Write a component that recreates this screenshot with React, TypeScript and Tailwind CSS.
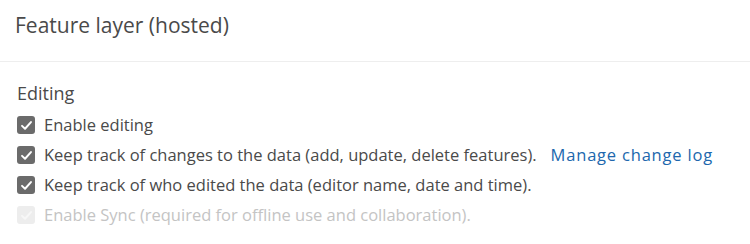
const Check = ({ disabled }: { disabled?: boolean }) => (
  <span
    className={`flex h-[18px] w-[18px] shrink-0 items-center justify-center rounded-[3px] ${
      disabled ? "bg-[#ededed]" : "bg-[#6b6b6b]"
    }`}
  >
    <svg viewBox="0 0 16 16" className="h-[13px] w-[13px]" fill="none">
      <path
        d="M2.5 8.5 L6.2 12 L13.5 3.8"
        stroke={disabled ? "#f7f7f7" : "#ffffff"}
        strokeWidth="2.4"
        strokeLinecap="round"
        strokeLinejoin="round"
      />
    </svg>
  </span>
);

const Row = ({ label, disabled, children }: { label: string; disabled?: boolean; children?: React.ReactNode }) => (
  <div className="flex h-[30px] items-center">
    <Check disabled={disabled} />
    <span className={`ml-[9px] ${disabled ? "text-[#c4c4c4]" : "text-[#4a4a4a]"}`}>{label}</span>
    {children}
  </div>
);

export default function App() {
  return (
    <div className="h-[244px] w-[750px] bg-white font-['Open_Sans',sans-serif] text-[#4a4a4a]">
      <div className="flex h-[62px] items-start border-b border-[#eeeeee] pl-[15px] pt-[10px]">
        <h1 className="text-[21px] leading-[30px] font-normal">Feature layer (hosted)</h1>
      </div>
      <div className="pl-[17px] pt-[18px]">
        <div className="text-[18px] leading-[26px]">Editing</div>
        <div className="mt-[4px] flex flex-col text-[16.5px]">
          <Row label="Enable editing" />
          <Row label="Keep track of changes to the data (add, update, delete features).">
            <a className="ml-[14px] tracking-[0.8px] text-[#2067ad]" href="#">
              Manage change log
            </a>
          </Row>
          <Row label="Keep track of who edited the data (editor name, date and time)." />
          <Row label="Enable Sync (required for offline use and collaboration)." disabled />
        </div>
      </div>
    </div>
  );
}
